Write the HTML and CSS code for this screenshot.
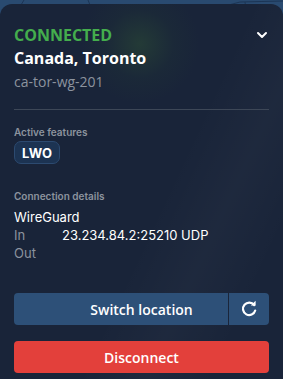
FILE: index.html
```html
<!DOCTYPE html>
<html>
<head>
<meta charset="utf-8">
<link rel="stylesheet" href="styles.css">
</head>
<body>
<div class="map">
  <svg class="map-lines" width="283" height="10" viewBox="0 0 283 10">
    <path d="M18 10 L24 0" stroke="#1c3555" stroke-width="1" fill="none"/>
    <path d="M88 0 L92 10" stroke="#1c3555" stroke-width="1" fill="none"/>
    <path d="M210 10 L240 2 L283 1" stroke="#1c3555" stroke-width="1" fill="none"/>
    <path d="M245 2 L246 10" stroke="#1c3555" stroke-width="1" fill="none"/>
  </svg>
</div>
<div class="card">
  <div class="glow"></div>
  <div class="sheen"></div>
  <div class="header">
    <div class="header-text">
      <div class="status">CONNECTED</div>
      <div class="location">Canada, Toronto</div>
      <div class="hostname">ca-tor-wg-201</div>
    </div>
    <svg class="chevron" width="12" height="8" viewBox="0 0 12 8">
      <path d="M2 2 L6 6 L10 2" stroke="#ffffff" stroke-width="2" fill="none" stroke-linecap="round" stroke-linejoin="round"/>
    </svg>
  </div>
  <div class="divider"></div>
  <div class="section">
    <div class="label">Active features</div>
    <div class="pills"><span class="pill">LWO</span></div>
  </div>
  <div class="section details">
    <div class="label">Connection details</div>
    <div class="protocol">WireGuard</div>
    <div class="row"><span class="key">In</span><span class="value">23.234.84.2:25210 UDP</span></div>
    <div class="row"><span class="key">Out</span><span class="value"></span></div>
  </div>
  <div class="actions">
    <div class="split">
      <button class="btn btn-blue main">Switch location</button>
      <button class="btn btn-blue reconnect" aria-label="Reconnect">
        <svg width="18" height="18" viewBox="0 0 18 18">
          <path d="M14.2 5.2 A6.2 6.2 0 1 0 15.2 10.5" stroke="#ffffff" stroke-width="2.2" fill="none" stroke-linecap="round"/>
          <path d="M10.8 5.6 L15.6 5.6 L15.6 0.8 Z" fill="#ffffff"/>
        </svg>
      </button>
    </div>
    <button class="btn btn-red">Disconnect</button>
  </div>
</div>
</body>
</html>
```
FILE: styles.css
```css
* { box-sizing: border-box; }
html, body { margin: 0; padding: 0; }
body {
  width: 283px;
  height: 379px;
  overflow: hidden;
  background: #294a70;
  font-family: "Open Sans", sans-serif;
  display: flex;
  flex-direction: column;
}
.map {
  height: 4px;
  position: relative;
}
.map-lines { position: absolute; left: 0; top: 0; }
.card {
  position: relative;
  flex: 1;
  background: #192439;
  border-radius: 12px 12px 0 0;
  padding: 20px 14px 0 14px;
  display: flex;
  flex-direction: column;
  overflow: hidden;
}
.glow {
  position: absolute;
  left: 80px;
  top: -20px;
  width: 120px;
  height: 120px;
  border-radius: 50%;
  background: radial-gradient(circle, rgba(55,100,50,0.35) 0%, rgba(40,75,50,0.12) 40%, rgba(25,36,57,0) 70%);
  pointer-events: none;
}
.sheen {
  position: absolute;
  left: 0; top: 0; right: 0; bottom: 0;
  background: linear-gradient(115deg, rgba(255,255,255,0) 55%, rgba(255,255,255,0.025) 70%, rgba(255,255,255,0) 85%);
  pointer-events: none;
}
.header {
  position: relative;
  display: flex;
  justify-content: space-between;
  align-items: flex-start;
}
.status {
  color: #44ad4d;
  font-weight: 700;
  font-size: 16px;
  line-height: 22px;
}
.location {
  color: #ffffff;
  font-weight: 700;
  font-size: 16px;
  line-height: 22px;
  margin-top: 1px;
}
.hostname {
  color: #8c939e;
  font-size: 14px;
  line-height: 20px;
  margin-top: 3px;
}
.chevron { margin-top: 7px; margin-right: 1px; }
.divider {
  position: relative;
  height: 1px;
  background: #3d4757;
  margin-top: 17px;
}
.label {
  font-family: "Inter", sans-serif;
  font-weight: 600;
  font-size: 10px;
  line-height: 14px;
  color: #8c939e;
}
.section { position: relative; margin-top: 15px; }
.pills { margin-top: 2px; display: flex; }
.pill {
  display: inline-flex;
  align-items: center;
  height: 23px;
  padding: 0 7px;
  border-radius: 7px;
  background: #1c3352;
  border: 1px solid #2c4a70;
  color: #ffffff;
  font-family: "Inter", sans-serif;
  font-weight: 700;
  font-size: 13px;
}
.details { margin-top: 25px; }
.protocol {
  font-family: "Inter", sans-serif;
  font-size: 13px;
  line-height: 18px;
  color: #ffffff;
  margin-top: 5px;
}
.row {
  display: flex;
  font-family: "Inter", sans-serif;
  font-size: 13px;
  line-height: 18px;
}
.key { width: 48px; color: #8c939e; }
.value { color: #ffffff; }
.actions {
  position: relative;
  margin-top: auto;
  margin-bottom: 6px;
  display: flex;
  flex-direction: column;
  gap: 16px;
}
.split { display: flex; gap: 1px; }
.btn {
  border: none;
  height: 32px;
  border-radius: 4px;
  font-family: "Open Sans", sans-serif;
  font-weight: 600;
  font-size: 14px;
  color: #ffffff;
  padding: 0;
  display: flex;
  align-items: center;
  justify-content: center;
}
.btn-blue { background: #2d5078; }
.main { flex: 1; border-radius: 4px 0 0 4px; padding-left: 41px; }
.reconnect { width: 40px; border-radius: 0 4px 4px 0; }
.btn-red { background: #e3403b; width: 100%; }
```
